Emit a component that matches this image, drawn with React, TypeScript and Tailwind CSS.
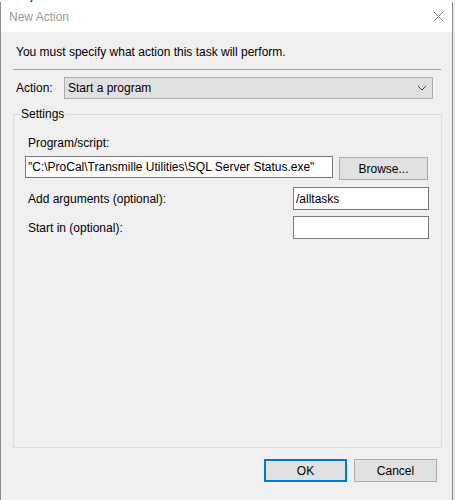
import React from 'react';

function Chevron() {
  return (
    <svg width="10" height="6" viewBox="0 0 10 6" className="block">
      <path d="M1 1 L5 5 L9 1" fill="none" stroke="#444" strokeWidth="1" />
    </svg>
  );
}

function CloseX() {
  return (
    <svg width="11" height="11" viewBox="0 0 11 11" className="block">
      <path d="M0.5 0.5 L10.5 10.5 M10.5 0.5 L0.5 10.5" fill="none" stroke="#808080" strokeWidth="1" />
    </svg>
  );
}

function TextBox({ value, className }: { value?: string; className: string }) {
  return (
    <div className={`bg-white border border-[#7a7a7a] flex items-center pl-[2px] ${className}`}>
      <span className="whitespace-nowrap">{value}</span>
    </div>
  );
}

export default function App() {
  return (
    <div
      className="w-[455px] h-[500px] bg-[#f0f0f0] overflow-hidden text-[12px] text-black leading-[16px]"
      style={{ fontFamily: '"Liberation Sans", Arial, sans-serif' }}
    >
      {/* window behind */}
      <div className="h-[2px] bg-white overflow-hidden whitespace-nowrap">
        <div className="-mt-[12px] flex text-[12px]">
          <span className="ml-[4px]">Every 1 hour for a duration of Ertsstoor</span>
          <span className="ml-[100px]">20/03/2018 08:58:00</span>
          <span className="ml-[14px]">20/03/2018 07:1</span>
        </div>
      </div>

      <div className="flex h-[498px]">
        {/* dialog */}
        <div className="w-[453px] h-full border-l border-r border-[#8c8c8c] flex flex-col bg-[#f0f0f0]">
          {/* title bar */}
          <div className="h-[30px] bg-white flex items-center justify-between pl-[8px] pr-[8px]">
            <span className="text-[#999999] text-[12px]">New Action</span>
            <div className="-mt-[1px]">
              <CloseX />
            </div>
          </div>

          {/* body */}
          <div className="flex flex-col">
            <p className="mt-[12px] ml-[15px]">You must specify what action this task will perform.</p>
            <div className="mt-[9px] ml-[12px] w-[428px] h-px bg-[#a0a0a0]" />

            <div className="mt-[7px] flex items-center ml-[15px]">
              <span className="w-[48px]">Action:</span>
              <div className="w-[369px] h-[22px] bg-[#e1e1e1] border border-[#adadad] flex items-center justify-between pl-[3px] pr-[5px]">
                <span>Start a program</span>
                <Chevron />
              </div>
            </div>

            <fieldset className="mt-[7px] ml-[12px] w-[429px] h-[342px] border border-[#dcdcdc] pl-[11px] pt-[13px]">
              <legend className="-ml-[5px] px-px">Settings</legend>
              <div className="pl-[3px]">Program/script:</div>
              <div className="mt-[5px] flex items-start">
                <TextBox value={'"C:\\ProCal\\Transmille Utilities\\SQL Server Status.exe"'} className="w-[308px] h-[22px]" />
                <button className="ml-[6px] mt-px w-[89px] h-[23px] bg-[#e1e1e1] border border-[#adadad] flex items-center justify-center">
                  Browse...
                </button>
              </div>
              <div className="mt-[7px] flex items-center">
                <span className="pl-[3px] w-[268px]">Add arguments (optional):</span>
                <TextBox value="/alltasks" className="w-[136px] h-[23px]" />
              </div>
              <div className="mt-[6px] flex items-center">
                <span className="pl-[3px] w-[268px]">Start in (optional):</span>
                <TextBox className="w-[136px] h-[23px]" />
              </div>
            </fieldset>

            <div className="mt-[11px] flex justify-end pr-[15px] gap-[7px]">
              <button className="w-[83px] h-[23px] bg-[#e1e1e1] border-2 border-[#0078d7] flex items-center justify-center">
                OK
              </button>
              <button className="w-[83px] h-[23px] bg-[#e1e1e1] border border-[#adadad] flex items-center justify-center">
                Cancel
              </button>
            </div>
          </div>
        </div>
        <div className="flex-1 bg-[#e8e8e8]" />
      </div>
    </div>
  );
}
